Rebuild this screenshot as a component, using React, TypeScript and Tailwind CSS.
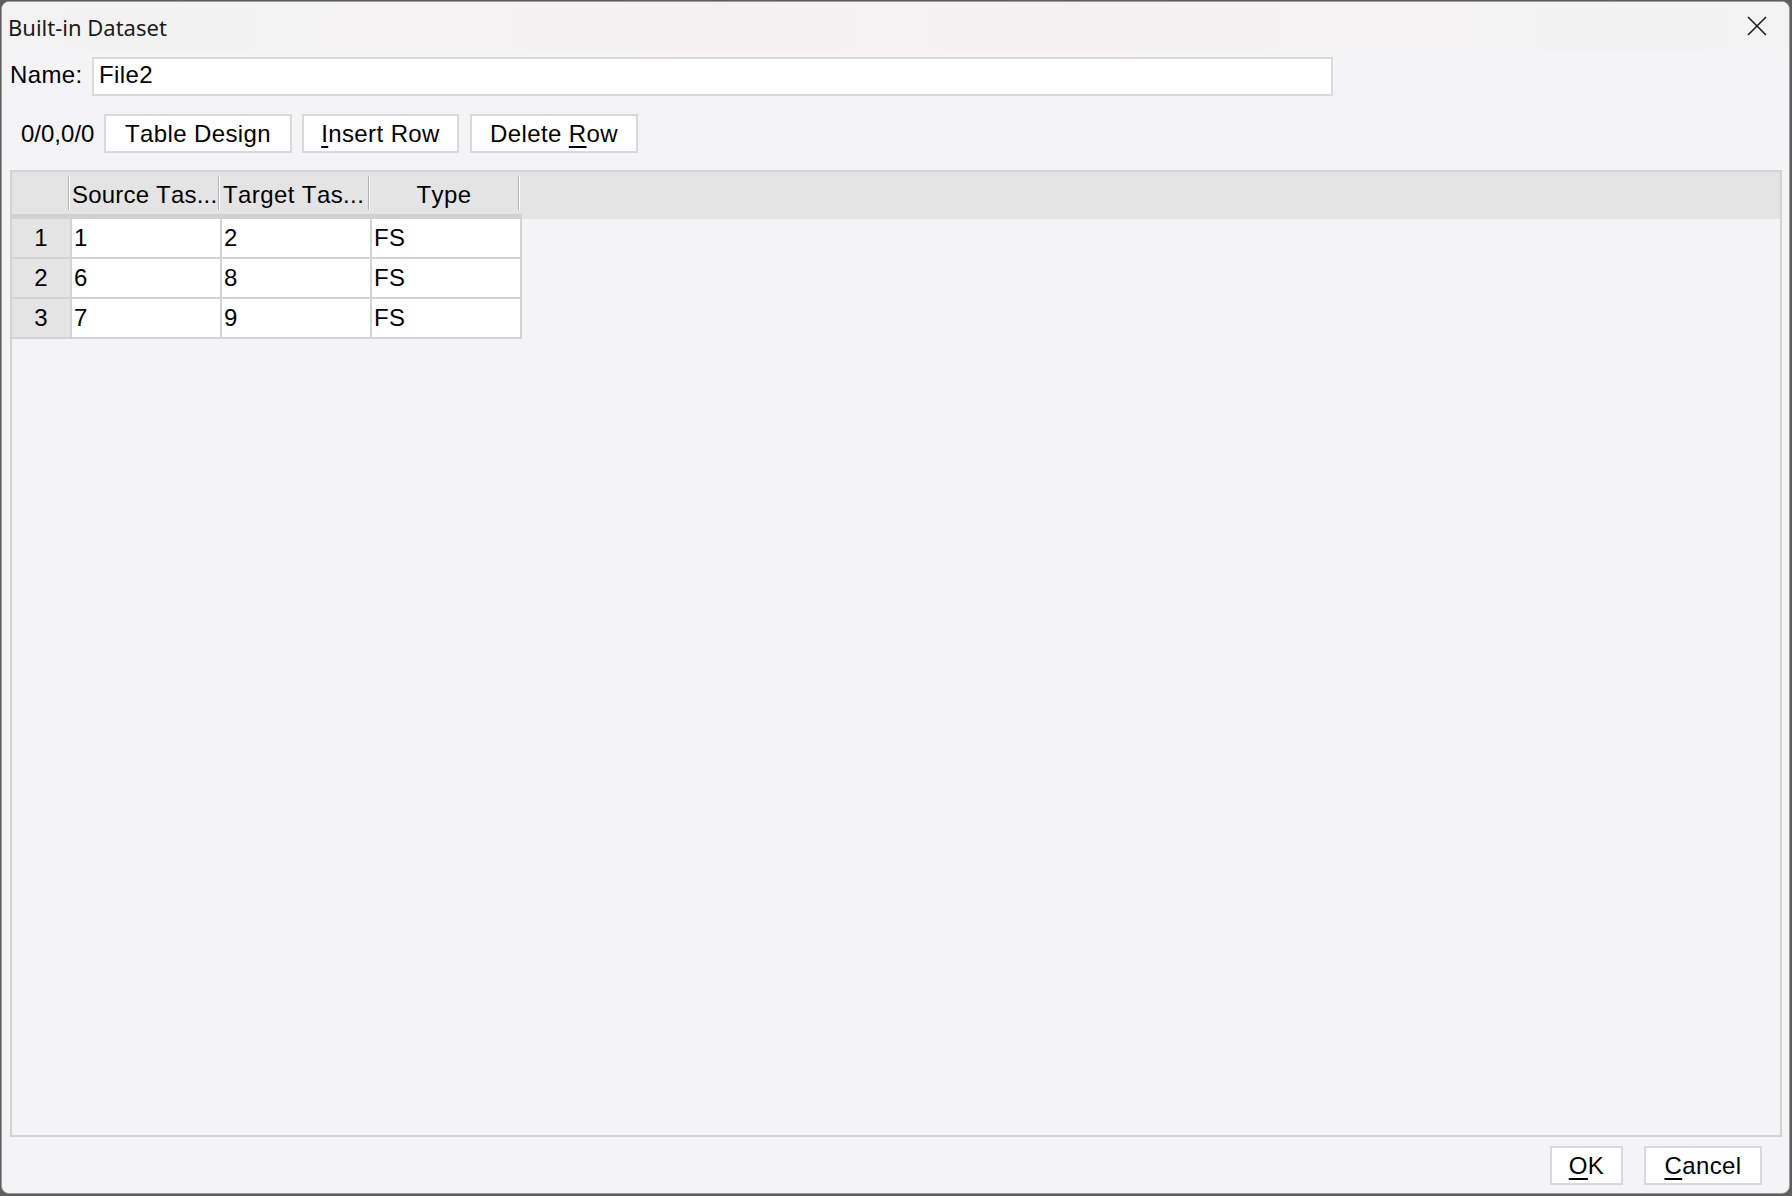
import React from "react";

const body = { fontFamily: '"Liberation Sans", Arial, sans-serif' };
const title = { fontFamily: '"Noto Sans", "Open Sans", sans-serif' };

const rows = [
    { n: "1", src: "1", tgt: "2", type: "FS" },
    { n: "2", src: "6", tgt: "8", type: "FS" },
    { n: "3", src: "7", tgt: "9", type: "FS" },
];

function Btn({ w, children }: { w: string; children: React.ReactNode }) {
    return (
        <div className={`${w} h-[39px] border-2 border-[#d9d9d9] bg-white text-center text-[24px] leading-[35px] text-black`}>
            {children}
        </div>
    );
}

function Sep() {
    return <div className="h-[34px] w-[2px] shrink-0 self-center border-l border-l-[#b7b3a8] border-r border-r-white"></div>;
}

export default function App() {
    return (
        <div className="w-[1792px] h-[1196px] bg-[#5e5e5e] pl-[1px] pt-[1px] tracking-[0.4px] [font-kerning:none]" style={body}>
            <div className="flex h-[1193px] w-[1789px] flex-col overflow-hidden rounded-[8px] border border-[#9a9a9a] bg-[#f4f4f6]">
                {/* title bar */}
                <div className="flex h-[50px] shrink-0 items-start justify-between bg-linear-to-r from-[#f3f3f4] via-[#f6f1f2] to-[#f3f3f3]">
                    <div className="mt-[11px] pl-[6px] text-[22px] leading-[28px] tracking-normal text-[#1a1a1a] [font-kerning:normal]" style={title}>
                        Built-in Dataset
                    </div>
                    <svg className="mr-[22px] mt-[14px]" width="20" height="20" viewBox="0 0 20 20">
                        <path d="M1 1 L19 19 M19 1 L1 19" stroke="#1c1c1c" strokeWidth="1.6" fill="none" />
                    </svg>
                </div>

                <div className="flex min-h-0 flex-1 flex-col pl-[8px] pr-[7px] pb-[8px]">
                    {/* name row */}
                    <div className="mt-[5px] flex items-start">
                        <div className="h-[39px] w-[82px] pt-[2px] text-[24px] leading-[31px] text-black">Name:</div>
                        <div className="h-[39px] w-[1241px] border-2 border-[#dadada] bg-white pl-[5px] text-[24px] leading-[31px] text-black">
                            File2
                        </div>
                    </div>

                    {/* toolbar */}
                    <div className="mt-[18px] flex items-start">
                        <div className="ml-[9px] h-[39px] w-[75px] whitespace-nowrap border-2 border-transparent text-[24px] leading-[35px] tracking-normal text-black">0/0,0/0</div>
                        <div className="ml-[10px]">
                            <Btn w="w-[188px]">Table Design</Btn>
                        </div>
                        <div className="ml-[10px]">
                            <Btn w="w-[157px]">
                                <span className="underline decoration-[2px] underline-offset-[4px]">I</span>nsert Row
                            </Btn>
                        </div>
                        <div className="ml-[11px]">
                            <Btn w="w-[168px]">
                                Delete <span className="underline decoration-[2px] underline-offset-[4px]">R</span>ow
                            </Btn>
                        </div>
                    </div>

                    {/* table scroll pane */}
                    <div className="mt-[17px] flex min-h-0 flex-1 flex-col border-2 border-[#d3d3d3] bg-[#f4f4f6]">
                        <div className="h-[47px] shrink-0 bg-[#e4e4e4]">
                            <div className="flex w-[510px] flex-col">
                                <div className="flex h-[42px] text-[24px] leading-[42px] text-black">
                                    <div className="flex w-[58px]">
                                        <div className="flex-1"></div>
                                        <Sep />
                                    </div>
                                    <div className="flex w-[150px]">
                                        <div className="flex-1 overflow-hidden whitespace-nowrap pl-[2px] pt-[2px] tracking-[0.2px]">Source Tas...</div>
                                        <Sep />
                                    </div>
                                    <div className="flex w-[150px]">
                                        <div className="flex-1 overflow-hidden whitespace-nowrap pl-[3px] pt-[2px]">Target Tas...</div>
                                        <Sep />
                                    </div>
                                    <div className="flex w-[150px]">
                                        <div className="flex-1 pt-[2px] text-center">Type</div>
                                        <Sep />
                                    </div>
                                </div>
                                <div className="h-[5px] bg-[#d1d1d1]"></div>
                            </div>
                        </div>

                        <div className="flex flex-col">
                            {rows.map((r) => (
                                <div key={r.n} className="flex w-[510px] border-b-2 border-[#d3d3d3] text-[24px] leading-[38px] text-black">
                                    <div className="h-[38px] w-[58px] bg-[#e4e4e4] text-center">{r.n}</div>
                                    <div className="h-[38px] w-[150px] border-l-2 border-[#d3d3d3] bg-white pl-[2px]">{r.src}</div>
                                    <div className="h-[38px] w-[150px] border-l-2 border-[#d3d3d3] bg-white pl-[2px]">{r.tgt}</div>
                                    <div className="h-[38px] w-[152px] border-x-2 border-[#d3d3d3] bg-white pl-[2px]">{r.type}</div>
                                </div>
                            ))}
                        </div>
                    </div>

                    {/* footer */}
                    <div className="mt-[9px] flex justify-end gap-[21px] pr-[20px]">
                        <Btn w="w-[73px]">
                            <span className="underline decoration-[2px] underline-offset-[4px]">O</span>K
                        </Btn>
                        <Btn w="w-[118px]">
                            <span className="underline decoration-[2px] underline-offset-[4px]">C</span>ancel
                        </Btn>
                    </div>
                </div>
            </div>
        </div>
    );
}
